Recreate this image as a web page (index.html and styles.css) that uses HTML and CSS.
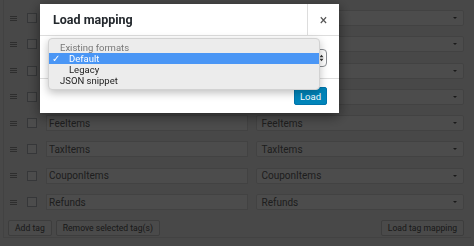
FILE: index.html
```html
<!DOCTYPE html>
<html>
<head>
    <title>Tag mapping</title>
    <link rel="stylesheet" href="styles.css">
</head>
<body>
    <div class="panel">
        <div class="rows">
            <div class="row"><span class="handle"></span><span class="check"></span><input class="tag" value=""><div class="map"><span class="caret"></span></div></div>
            <div class="row"><span class="handle"></span><span class="check"></span><input class="tag" value=""><div class="map"><span class="caret"></span></div></div>
            <div class="row"><span class="handle"></span><span class="check"></span><input class="tag" value=""><div class="map"><span class="caret"></span></div></div>
            <div class="row"><span class="handle"></span><span class="check"></span><input class="tag" value=""><div class="map"><span class="caret"></span></div></div>
            <div class="row"><span class="handle"></span><span class="check"></span><input class="tag" value="FeeItems"><div class="map">FeeItems<span class="caret"></span></div></div>
            <div class="row"><span class="handle"></span><span class="check"></span><input class="tag" value="TaxItems"><div class="map">TaxItems<span class="caret"></span></div></div>
            <div class="row"><span class="handle"></span><span class="check"></span><input class="tag" value="CouponItems"><div class="map">CouponItems<span class="caret"></span></div></div>
            <div class="row"><span class="handle"></span><span class="check"></span><input class="tag" value="Refunds"><div class="map">Refunds<span class="caret"></span></div></div>
        </div>
        <div class="actions">
            <button class="btn">Add tag</button>
            <button class="btn">Remove selected tag(s)</button>
            <button class="btn push">Load tag mapping</button>
        </div>
    </div>

    <div class="backdrop"></div>

    <div class="modal">
        <div class="modal-head">
            <h2>Load mapping</h2>
            <button class="close">&times;</button>
        </div>
        <div class="modal-body">
            <div class="format-select">
                <svg class="updown" width="5" height="8" viewBox="0 0 5 8"><path d="M0.5 3.2 L2.5 0.8 L4.5 3.2 Z M0.5 4.8 L2.5 7.2 L4.5 4.8 Z" fill="#333"/></svg>
            </div>
        </div>
        <div class="modal-foot">
            <button class="load">Load</button>
        </div>

        <ul class="menu">
            <li class="group">Existing formats</li>
            <li class="opt sub active"><span class="tick">&#10003;</span>Default</li>
            <li class="opt sub">Legacy</li>
            <li class="opt">JSON snippet</li>
        </ul>
    </div>
</body>
</html>
```

FILE: styles.css
```css
body {
    margin: 0;
    background-color: #f1f1f1;
    font-family: "Roboto", "Liberation Sans", sans-serif;
    color: #666;
}

.panel {
    margin: 0 3px 0 3px;
    padding: 10px 7px 0 6px;
    height: 238px;
    box-sizing: border-box;
    border-left: 1px solid #ddd;
    border-bottom: 1px solid #ddd;
}

.rows {
    display: flex;
    flex-direction: column;
    gap: 10.3px;
}

.row {
    display: flex;
    align-items: center;
    height: 16px;
}

.handle {
    width: 7px;
    height: 5px;
    margin-right: 10px;
    background: repeating-linear-gradient(#999 0 1px, transparent 1px 2px);
}

.check {
    width: 10px;
    height: 10px;
    border: 1px solid #b4b9be;
    box-sizing: border-box;
    background-color: #fff;
    margin-right: 9px;
}

.tag,
.map {
    flex: 1;
    height: 16px;
    box-sizing: border-box;
    border: 1px solid #ddd;
    background-color: #fff;
    font-family: inherit;
    font-size: 10px;
    color: #666;
    padding: 0 2px;
    min-width: 0;
}

.tag {
    margin-right: 8px;
}

.map {
    display: flex;
    align-items: center;
    justify-content: space-between;
    border-radius: 2px;
    padding: 0 6px 0 5px;
}

.caret {
    width: 0;
    height: 0;
    margin-left: auto;
    border-left: 2px solid transparent;
    border-right: 2px solid transparent;
    border-top: 2px solid #555;
}

.actions {
    display: flex;
    gap: 4px;
    margin: 10px 0 0 -2px;
}

.btn {
    height: 16px;
    padding: 0 6px;
    border: 1px solid #ccc;
    border-radius: 2px;
    background-color: #f7f7f7;
    font-family: inherit;
    font-size: 8.6px;
    color: #555;
}

.push {
    margin-left: auto;
}

.backdrop {
    position: fixed;
    inset: 0;
    background-color: rgba(0, 0, 0, 0.7);
}

.modal {
    position: fixed;
    top: 4px;
    left: 40px;
    width: 299px;
    height: 109px;
    background-color: #fff;
    box-shadow: 0 3px 12px rgba(0, 0, 0, 0.5);
    display: flex;
    flex-direction: column;
}

.modal-head {
    display: flex;
    height: 31px;
    border-bottom: 1px solid #ddd;
}

.modal-head h2 {
    flex: 1;
    margin: 0;
    padding-left: 13px;
    font-size: 12.5px;
    font-weight: 700;
    line-height: 31px;
    color: #23282d;
}

.close {
    width: 32px;
    border: none;
    border-left: 1px solid #ddd;
    background: none;
    font-family: inherit;
    font-size: 14px;
    color: #555;
    padding: 0;
}

.modal-body {
    height: 43px;
    box-sizing: border-box;
    padding: 13px 12px 0 12px;
    border-bottom: 1px solid #ddd;
}

.format-select {
    display: flex;
    align-items: center;
    justify-content: flex-end;
    height: 18px;
    box-sizing: border-box;
    border: 1px solid #8c8f94;
    border-radius: 4px;
    padding: 0 2px 0 6px;
}

.modal-foot {
    flex: 1;
    display: flex;
    justify-content: flex-end;
    padding: 8px 12px 0 0;
}

.load {
    width: 33px;
    height: 18px;
    padding: 0;
    border: 1px solid #0073aa;
    border-radius: 2px;
    background-color: #0085ba;
    color: #fff;
    font-family: inherit;
    font-size: 9.5px;
}

.menu {
    position: absolute;
    top: 34px;
    left: 8px;
    width: 272px;
    margin: 0;
    padding: 3px 0;
    list-style: none;
    background-color: #ececec;
    border: 1px solid #d2d2d2;
    border-radius: 4px;
    box-sizing: border-box;
    box-shadow: 0 3px 8px rgba(0, 0, 0, 0.25);
    font-size: 9.5px;
    color: #222;
}

.menu li {
    position: relative;
    height: 11px;
    line-height: 11px;
    padding-left: 11px;
}

.menu .group {
    color: #777;
}

.menu .sub {
    padding-left: 20px;
}

.menu .active {
    background-color: #4a96f5;
    color: #fff;
}

.tick {
    position: absolute;
    left: 3px;
    top: 0;
}
```
